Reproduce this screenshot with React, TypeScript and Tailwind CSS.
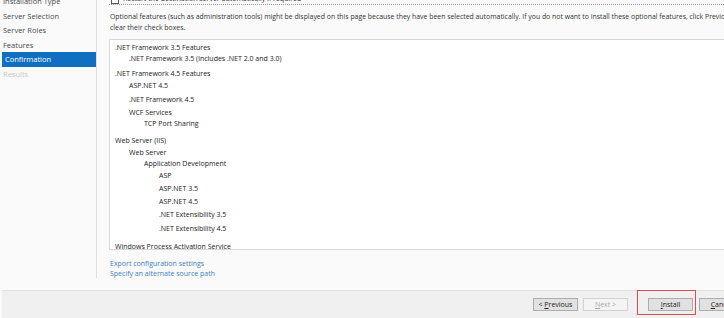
import React from "react";

const steps = [
  { label: "Installation Type", state: "done" },
  { label: "Server Selection", state: "done" },
  { label: "Server Roles", state: "done" },
  { label: "Features", state: "done" },
  { label: "Confirmation", state: "active" },
  { label: "Results", state: "disabled" },
];

// class strings kept whole so Tailwind picks them up
const features = [
  { text: ".NET Framework 3.5 Features", cls: "mt-0 pl-0" },
  { text: ".NET Framework 3.5 (includes .NET 2.0 and 3.0)", cls: "mt-0 pl-[14px]" },
  { text: ".NET Framework 4.5 Features", cls: "mt-[4px] pl-0" },
  { text: "ASP.NET 4.5", cls: "mt-[1px] pl-[14px]" },
  { text: ".NET Framework 4.5", cls: "mt-[3px] pl-[14px]" },
  { text: "WCF Services", cls: "mt-[2px] pl-[14px]" },
  { text: "TCP Port Sharing", cls: "mt-0 pl-[29px]" },
  { text: "Web Server (IIS)", cls: "mt-[6px] pl-0" },
  { text: "Web Server", cls: "mt-[1px] pl-[14px]" },
  { text: "Application Development", cls: "mt-0 pl-[29px]" },
  { text: "ASP", cls: "mt-[1px] pl-[44px]" },
  { text: "ASP.NET 3.5", cls: "mt-[2px] pl-[44px]" },
  { text: "ASP.NET 4.5", cls: "mt-[2px] pl-[44px]" },
  { text: ".NET Extensibility 3.5", cls: "mt-[2px] pl-[44px]" },
  { text: ".NET Extensibility 4.5", cls: "mt-[3px] pl-[44px]" },
  { text: "Windows Process Activation Service", cls: "mt-[7px] pl-0" },
];

function Sidebar() {
  return (
    <div className="w-[97px] h-[278px] shrink-0 border-r border-[#dedede] overflow-hidden">
      <div className="-mt-[6px]">
        {steps.map((s) => (
          <div
            key={s.label}
            className={
              s.state === "active"
                ? "h-[14.5px] leading-[14.5px] pl-[3px] ml-[2px] bg-[#0f6fc0] text-white"
                : s.state === "disabled"
                ? "h-[14.5px] leading-[14.5px] pl-[3px] text-[#c6c6c6]"
                : "h-[14.5px] leading-[14.5px] pl-[3px] text-[#4a4a4a]"
            }
          >
            {s.label}
          </div>
        ))}
      </div>
    </div>
  );
}

function Btn({ label, u, disabled, cls }: { label: string; u: string; disabled?: boolean; cls: string }) {
  const i = label.indexOf(u);
  return (
    <div
      className={
        (disabled
          ? "border-[#d2d2d2] bg-[#f4f4f4] text-[#a8a8a8] "
          : "border-[#adadad] bg-[#e1e1e1] text-[#222] ") +
        "h-[13px] w-[45px] shrink-0 border text-center leading-[11px] whitespace-pre " +
        cls
      }
    >
      {label.slice(0, i)}
      <span className="underline">{u}</span>
      {label.slice(i + 1)}
    </div>
  );
}

export default function App() {
  return (
    <div
      className="relative w-[724px] h-[318px] overflow-hidden bg-[#fafafa] text-[7.5px] flex flex-col"
      style={{ fontFamily: "'Open Sans', 'Noto Sans', sans-serif" }}
    >
      <div className="h-[290px] flex">
        <Sidebar />
        <div className="flex-1 min-w-0 pl-[12px] text-[7px] text-[#333]">
          {/* Restart checkbox, scrolled mostly out of view */}
          <div className="-mt-[5px] h-[10px] flex items-center border-b border-dotted border-[#9a9a9a] pl-[2px] whitespace-nowrap">
            <div className="w-[8px] h-[8px] border border-[#555] bg-white" />
            <span className="ml-[4px] text-[#333]">Restart the destination server automatically if required</span>
          </div>
          <p className="mt-[6px] pl-[1px] leading-[11px] whitespace-nowrap text-[6.9px]">
            Optional features (such as administration tools) might be displayed on this page because they have been selected automatically. If you do not want to install these optional features, click Previous to
            <br />
            clear their check boxes.
          </p>
          <div className="mt-[6px] -mr-[10px] h-[211px] border border-[#d8d8d8] bg-white overflow-hidden pt-[2px] pl-[5px] text-[#222] whitespace-nowrap">
            {features.map((f, i) => (
              <div key={i} className={"leading-[11px] " + f.cls}>
                {f.text}
              </div>
            ))}
          </div>
          <div className="mt-[9px] pl-[1px] text-[#3a7fc1] leading-[10px]">
            <div>Export configuration settings</div>
            <div>Specify an alternate source path</div>
          </div>
        </div>
      </div>
      <div className="flex-1 ml-[2px] bg-[#f0f0f0] border-t border-[#e2e2e2] flex items-start pt-[7px] text-[7px]">
        <Btn label="< Previous" u="P" cls="ml-[531px]" />
        <Btn label="Next >" u="N" disabled cls="ml-[5px]" />
        <Btn label="Install" u="I" cls="ml-[20px]" />
        <Btn label="Cancel" u="C" cls="ml-[6px]" />
      </div>
      {/* red highlight around Install */}
      <div className="absolute left-[637px] top-[290px] w-[59px] h-[25px] border border-[#e34a4a]" />
    </div>
  );
}
